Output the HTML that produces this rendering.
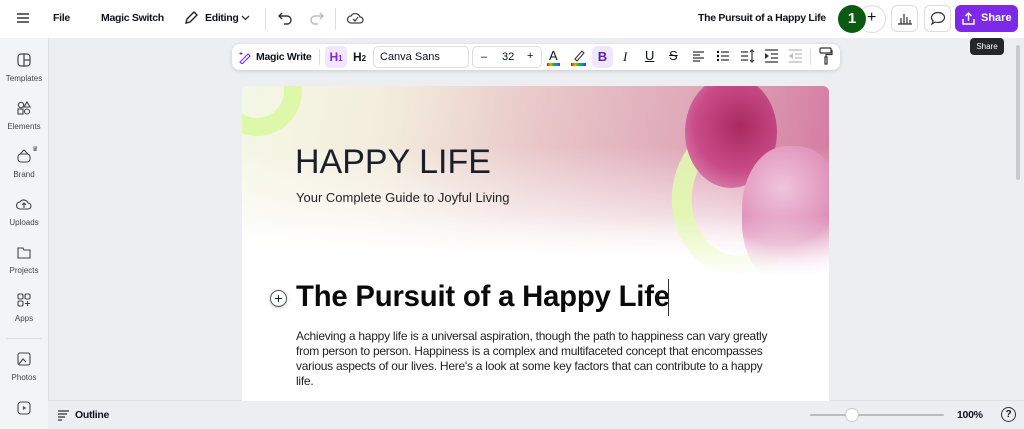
<!DOCTYPE html>
<html><head><style>
*{box-sizing:border-box;margin:0;padding:0}
body{width:1024px;height:429px;overflow:hidden;background:#eceef2;font-family:"Liberation Sans",sans-serif;color:#0e1318;position:relative}
.a{position:absolute}
.top{left:0;top:0;width:1024px;height:38px;background:#fff}
.side{left:0;top:38px;width:48px;height:391px;background:#f3f4f6}
.si{position:absolute;left:0;width:48px;text-align:center;font-size:8px;color:#444}
.si svg{display:block;margin:0 auto 7px}
.tb{left:232px;top:44px;width:608px;height:26px;background:#fff;border-radius:8px;box-shadow:0 1px 4px rgba(0,0,0,.15)}
.t{font-size:10.5px;font-weight:bold;position:absolute;letter-spacing:-.3px}
</style></head><body>
<div class="a top"></div>
<svg class="a" style="left:16px;top:12px" width="14" height="12"><path d="M1 2h12M1 6h12M1 10h12" stroke="#333" stroke-width="1.5"/></svg>
<div class="t" style="left:53px;top:12px">File</div>
<div class="t" style="left:101px;top:12px">Magic Switch</div>
<svg class="a" style="left:183px;top:10px" width="16" height="16"><path d="M3 13l1-4 7-7 3 3-7 7z" fill="none" stroke="#222" stroke-width="1.4"/></svg>
<div class="t" style="left:205px;top:12px">Editing</div>
<svg class="a" style="left:241px;top:15px" width="9" height="6"><path d="M1 1l3.5 3.5L8 1" fill="none" stroke="#333" stroke-width="1.3"/></svg>
<div class="a" style="left:265px;top:8px;width:1px;height:22px;background:#ddd"></div>
<svg class="a" style="left:278px;top:11px" width="16" height="14"><path d="M4 2L1 5l3 3M1 5h8a4 4 0 0 1 0 8H6" fill="none" stroke="#333" stroke-width="1.4"/></svg>
<svg class="a" style="left:308px;top:11px" width="16" height="14"><path d="M12 2l3 3-3 3M15 5H7a4 4 0 0 0 0 8h3" fill="none" stroke="#bbb" stroke-width="1.4"/></svg>
<div class="a" style="left:335px;top:8px;width:1px;height:22px;background:#ddd"></div>
<svg class="a" style="left:346px;top:10px" width="18" height="16"><path d="M5 13h9a3 3 0 0 0 0-6 5 5 0 0 0-9-1 3.5 3.5 0 0 0 0 7z" fill="none" stroke="#444" stroke-width="1.3"/><path d="M7 9l2 2 3-4" fill="none" stroke="#444" stroke-width="1.3"/></svg>
<div class="t" style="left:698px;top:12px">The Pursuit of a Happy Life</div>
<div class="a" style="left:858px;top:5px;width:28px;height:28px;border-radius:50%;border:1px solid #ddd;background:#fff"></div>
<div class="a" style="left:838px;top:5px;width:28px;height:28px;border-radius:50%;background:#0b5a12;color:#fff;font-weight:bold;font-size:15px;text-align:center;line-height:28px">1</div>
<div class="a" style="left:867px;top:9px;font-size:16px">+</div>
<div class="a" style="left:891px;top:5px;width:27px;height:27px;border-radius:6px;border:1px solid #ddd"></div>
<svg class="a" style="left:897px;top:11px" width="16" height="14"><path d="M1 13h14M4 13V7M7 13V3M10 13V6M13 13V9" stroke="#333" stroke-width="1.2"/></svg>
<div class="a" style="left:924px;top:5px;width:27px;height:27px;border-radius:6px;border:1px solid #ddd"></div>
<svg class="a" style="left:930px;top:11px" width="16" height="15"><path d="M8 1.5c3.6 0 6.5 2.3 6.5 5s-2.9 5-6.5 5c-1 0-2-.2-2.8-.5L2 13l1-3C2 9 1.5 7.8 1.5 6.5c0-2.7 2.9-5 6.5-5z" fill="none" stroke="#333" stroke-width="1.2"/></svg>
<div class="a" style="left:955px;top:5px;width:63px;height:27px;border-radius:6px;background:#7d2ae8"></div>
<svg class="a" style="left:961px;top:11px" width="15" height="15"><path d="M7.5 10V2M4.5 5l3-3 3 3M2 8v5h11V8" fill="none" stroke="#fff" stroke-width="1.4"/></svg>
<div class="a" style="left:981px;top:12px;color:#fff;font-weight:bold;font-size:11px">Share</div>
<div class="a" style="left:970px;top:38px;width:34px;height:17px;border-radius:4px;background:#252627;color:#fff;font-size:8px;text-align:center;line-height:17px">Share</div>

<div class="a side"></div>
<div class="a" style="left:48px;top:38px;width:1px;height:363px;background:#dfe1e5"></div>
<div class="a" style="left:48px;top:400px;width:976px;height:1px;background:#dfe1e5"></div>
<div class="a" style="left:1016px;top:45px;width:4px;height:135px;background:#c8cacf;border-radius:2px"></div>
<div class="si" style="top:53px"><svg width="14" height="14"><rect x="1" y="1" width="12" height="12" rx="3" fill="none" stroke="#444" stroke-width="1.2"/><path d="M7 1v12M7 7h6" stroke="#444" stroke-width="1.2"/></svg>Templates</div>
<div class="si" style="top:101px"><svg width="14" height="14"><circle cx="4" cy="4" r="2.7" fill="none" stroke="#444" stroke-width="1.1"/><path d="M10 1l3 5H7z" fill="none" stroke="#444" stroke-width="1.1"/><rect x="1" y="8" width="5" height="5" fill="none" stroke="#444" stroke-width="1.1"/><circle cx="10" cy="10.5" r="2.5" fill="none" stroke="#444" stroke-width="1.1"/></svg>Elements</div>
<div class="si" style="top:149px"><svg width="14" height="14"><rect x="1" y="5" width="12" height="8" rx="3" fill="none" stroke="#444" stroke-width="1.1"/><path d="M3 5l4-4 4 4" fill="none" stroke="#444" stroke-width="1.1"/></svg>Brand</div>
<div class="a" style="left:32px;top:145px;font-size:7px;color:#555">♛</div>
<div class="si" style="top:197px"><svg width="16" height="14"><path d="M4 12h8a3 3 0 0 0 0-6 4.5 4.5 0 0 0-8-1 3.5 3.5 0 0 0 0 7z" fill="none" stroke="#444" stroke-width="1.1"/><path d="M8 11V6M6 8l2-2 2 2" fill="none" stroke="#444" stroke-width="1.1"/></svg>Uploads</div>
<div class="si" style="top:245px"><svg width="14" height="14"><path d="M1 3h5l1 2h6v8H1z" fill="none" stroke="#444" stroke-width="1.1"/></svg>Projects</div>
<div class="si" style="top:293px"><svg width="14" height="14"><rect x="1" y="1" width="5" height="5" rx="1.5" fill="none" stroke="#444" stroke-width="1.1"/><rect x="8" y="1" width="5" height="5" rx="1.5" fill="none" stroke="#444" stroke-width="1.1"/><rect x="1" y="8" width="5" height="5" rx="1.5" fill="none" stroke="#444" stroke-width="1.1"/><path d="M10.5 8v5M8 10.5h5" stroke="#444" stroke-width="1.1"/></svg>Apps</div>
<div class="a" style="left:6px;top:338px;width:36px;height:1px;background:#ddd"></div>
<div class="si" style="top:352px"><svg width="14" height="14"><rect x="1" y="1" width="12" height="12" rx="2" fill="none" stroke="#444" stroke-width="1.1"/><path d="M2 12l4-5 3 3" fill="none" stroke="#444" stroke-width="1.1"/></svg>Photos</div>
<div class="si" style="top:401px"><svg width="14" height="14"><rect x="1" y="1" width="12" height="12" rx="3" fill="none" stroke="#444" stroke-width="1.1"/><path d="M6 5l3 2-3 2z" fill="#444"/></svg></div>

<!-- page -->
<div class="a" style="left:242px;top:86px;width:587px;height:315px;background:#fff;border-radius:6px 6px 0 0;overflow:hidden">
  <div class="a" style="left:0;top:0;width:587px;height:175px;background:linear-gradient(100deg,#f4f8e6 0%,#f3ecdc 25%,#e8c6c8 50%,#dca0b4 80%,#d4779e 100%)"></div>
  <div class="a" style="left:0;top:60px;width:587px;height:120px;background:linear-gradient(180deg,rgba(255,255,255,0),#fff 95%)"></div>
  <div class="a" style="left:-30px;top:-40px;width:90px;height:90px;border-radius:50%;border:18px solid #def7a8"></div>
  <div class="a" style="left:430px;top:30px;width:140px;height:160px;border-radius:50%;border:20px solid #e2f8b0;border-right-color:transparent;border-top-color:transparent;transform:rotate(10deg);opacity:.9"></div>
  <div class="a" style="left:443px;top:-10px;width:92px;height:112px;border-radius:50%;background:radial-gradient(circle at 60% 45%,#a82a60,#c84c88 55%,#e6a0c4)"></div>
  <div class="a" style="left:500px;top:60px;width:100px;height:140px;border-radius:45%;background:radial-gradient(circle at 40% 30%,#f0c4dc,#dd8cb6 50%,rgba(255,255,255,0) 90%)"></div>
  <div class="a" style="left:0;top:130px;width:587px;height:80px;background:linear-gradient(180deg,rgba(255,255,255,0),#fff 75%)"></div>
</div>
<div class="a" style="left:295px;top:143px;font-size:34px;color:#1a1f2b">HAPPY LIFE</div>
<div class="a" style="left:296px;top:190px;font-size:13px;color:#222">Your Complete Guide to Joyful Living</div>
<div class="a" style="left:270px;top:290px;width:17px;height:17px;border-radius:50%;background:#fff;border:1px solid #555;box-shadow:0 1px 4px rgba(0,0,0,.2);text-align:center;line-height:14px;font-size:14px">+</div>
<div class="a" style="left:296px;top:280px;font-size:29.3px;font-weight:bold;color:#0a0a0a;letter-spacing:-.2px">The Pursuit of a Happy Life</div>
<div class="a" style="left:668px;top:279px;width:1px;height:37px;background:#333"></div>
<div class="a" style="left:296px;top:329px;width:485px;font-size:12px;line-height:15px;color:#222;letter-spacing:-.25px">Achieving a happy life is a universal aspiration, though the path to happiness can vary greatly from person to person. Happiness is a complex and multifaceted concept that encompasses various aspects of our lives. Here's a look at some key factors that can contribute to a happy life.</div>

<!-- toolbar -->
<div class="a tb"></div>
<svg class="a" style="left:238px;top:50px" width="14" height="14"><path d="M2 12l8-8 2 2-8 8z" fill="none" stroke="#7d2ae8" stroke-width="1.1"/><path d="M3 2v3M1.5 3.5h3" stroke="#7d2ae8"/></svg>
<div class="a" style="left:256px;top:51px;font-size:10.5px;font-weight:bold;letter-spacing:-.3px">Magic Write</div>
<div class="a" style="left:319px;top:49px;width:1px;height:16px;background:#ddd"></div>
<div class="a" style="left:325px;top:46px;width:22px;height:22px;border-radius:5px;background:#f0e6fd;color:#7d2ae8;font-weight:bold;font-size:12px;text-align:center;line-height:22px">H<small style="font-size:8px">1</small></div>
<div class="a" style="left:353px;top:50px;font-weight:bold;font-size:12px">H<small style="font-size:8px">2</small></div>
<div class="a" style="left:373px;top:46px;width:96px;height:22px;border:1px solid #ddd;border-radius:5px;font-size:11px;padding:4px 6px">Canva Sans</div>
<div class="a" style="left:472px;top:46px;width:70px;height:22px;border:1px solid #ddd;border-radius:5px;font-size:11px"><span class="a" style="left:8px;top:4px">–</span><span class="a" style="left:29px;top:4px">32</span><span class="a" style="left:54px;top:3px">+</span></div>
<div class="a" style="left:549px;top:48px;font-size:13px">A</div><div class="a" style="left:547px;top:63px;width:13px;height:3px;background:linear-gradient(90deg,red,orange,#0c0,#08f,#a0f)"></div>
<svg class="a" style="left:572px;top:48px" width="14" height="14"><path d="M3 11l7-8 2 2-7 8z" fill="none" stroke="#333" stroke-width="1.1"/></svg><div class="a" style="left:571px;top:63px;width:15px;height:3px;background:linear-gradient(90deg,red,orange,#0c0,#08f,#a0f)"></div>
<div class="a" style="left:592px;top:46px;width:21px;height:22px;border-radius:5px;background:#f0e6fd;color:#5b1fb0;font-weight:bold;font-size:13px;text-align:center;line-height:22px">B</div>
<div class="a" style="left:623px;top:49px;font-size:13px;font-style:italic;font-family:'Liberation Serif',serif">I</div>
<div class="a" style="left:645px;top:48px;font-size:13px;text-decoration:underline">U</div>
<div class="a" style="left:669px;top:48px;font-size:13px;text-decoration:line-through">S</div>
<svg class="a" style="left:692px;top:50px" width="13" height="12"><path d="M1 2h11M1 5h7M1 8h11M1 11h7" stroke="#333" stroke-width="1.2"/></svg>
<svg class="a" style="left:716px;top:50px" width="14" height="12"><path d="M5 2h8M5 6h8M5 10h8" stroke="#333" stroke-width="1.2"/><circle cx="2" cy="2" r="1.2"/><circle cx="2" cy="6" r="1.2"/><circle cx="2" cy="10" r="1.2"/></svg>
<svg class="a" style="left:740px;top:49px" width="15" height="14"><path d="M1 3h7M1 7h7M1 11h7M12 1v12M10 3l2-2 2 2M10 11l2 2 2-2" fill="none" stroke="#333" stroke-width="1.2"/></svg>
<svg class="a" style="left:764px;top:49px" width="15" height="14"><path d="M1 1h13M7 5h7M7 9h7M1 13h13" stroke="#333" stroke-width="1.2"/><path d="M1 4l4 3-4 3z" fill="#333"/></svg>
<svg class="a" style="left:788px;top:49px" width="15" height="14"><path d="M1 1h13M7 5h7M7 9h7M1 13h13" stroke="#bbb" stroke-width="1.2"/><path d="M5 4L1 7l4 3z" fill="#bbb"/></svg>
<div class="a" style="left:810px;top:49px;width:1px;height:16px;background:#ddd"></div>
<svg class="a" style="left:819px;top:47px" width="14" height="18"><rect x="1" y="1" width="11" height="5" rx="1" fill="none" stroke="#333" stroke-width="1.2"/><path d="M12 3.5h1v4H7v3M6 10h2v7H6z" fill="none" stroke="#333" stroke-width="1.2"/></svg>

<!-- bottom -->
<svg class="a" style="left:58px;top:410px" width="12" height="11"><path d="M0 1h11M0 4h9M0 7h7M0 10h4" stroke="#333" stroke-width="1.3"/></svg>
<div class="a" style="left:75px;top:409px;font-size:10.5px;font-weight:bold;letter-spacing:-.3px">Outline</div>
<div class="a" style="left:810px;top:414px;width:134px;height:2px;background:#bbb;border-radius:1px"></div>
<div class="a" style="left:845px;top:408px;width:14px;height:14px;border-radius:50%;background:#fff;border:1px solid #ccc"></div>
<div class="a" style="left:957px;top:409px;font-size:10.5px;font-weight:bold;letter-spacing:-.3px">100%</div>
<div class="a" style="left:1001px;top:407px;width:15px;height:15px;border-radius:50%;border:1.3px solid #333;font-size:10px;font-weight:bold;text-align:center;line-height:13px">?</div>
</body></html>
